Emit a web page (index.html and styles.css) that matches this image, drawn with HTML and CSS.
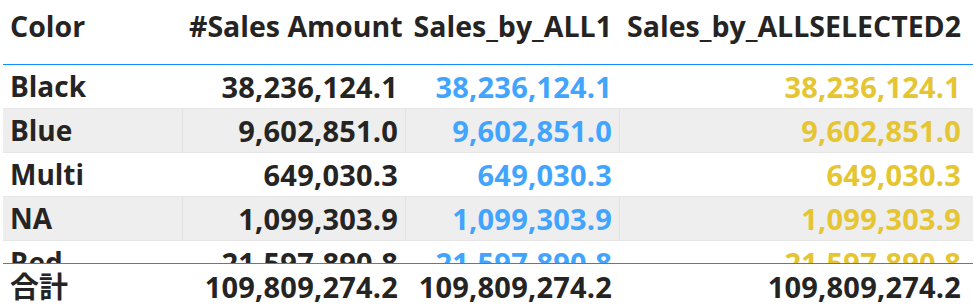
FILE: index.html
```html
<!DOCTYPE html>
<html>
<head>
<meta charset="utf-8">
<link rel="stylesheet" href="styles.css">
</head>
<body>
<div class="table">
  <div class="row head">
    <div class="cell left">Color</div>
    <div class="cell">#Sales Amount</div>
    <div class="cell">Sales_by_ALL1</div>
    <div class="cell">Sales_by_ALLSELECTED2</div>
  </div>
  <div class="body">
    <div class="row data">
      <div class="cell left">Black</div>
      <div class="cell num">38,236,124.1</div>
      <div class="cell num blue">38,236,124.1</div>
      <div class="cell num gold">38,236,124.1</div>
    </div>
    <div class="row data alt">
      <div class="cell left">Blue</div>
      <div class="cell num">9,602,851.0</div>
      <div class="cell num blue">9,602,851.0</div>
      <div class="cell num gold">9,602,851.0</div>
    </div>
    <div class="row data">
      <div class="cell left">Multi</div>
      <div class="cell num">649,030.3</div>
      <div class="cell num blue">649,030.3</div>
      <div class="cell num gold">649,030.3</div>
    </div>
    <div class="row data alt">
      <div class="cell left">NA</div>
      <div class="cell num">1,099,303.9</div>
      <div class="cell num blue">1,099,303.9</div>
      <div class="cell num gold">1,099,303.9</div>
    </div>
    <div class="row data">
      <div class="cell left">Red</div>
      <div class="cell num">21,597,890.8</div>
      <div class="cell num blue">21,597,890.8</div>
      <div class="cell num gold">21,597,890.8</div>
    </div>
  </div>
  <div class="row total">
    <div class="cell left cjk">合計</div>
    <div class="cell num">109,809,274.2</div>
    <div class="cell num">109,809,274.2</div>
    <div class="cell num">109,809,274.2</div>
  </div>
</div>
</body>
</html>
```
FILE: styles.css
```css
html, body {
  margin: 0;
  padding: 0;
  background: #ffffff;
}
body {
  font-family: "Open Sans", "Noto Sans CJK JP", sans-serif;
  font-weight: 700;
  color: #252423;
}
.table {
  margin-left: 3px;
  width: 970px;
}
.row {
  display: grid;
  grid-template-columns: 179px 223px 214px 349px;
}
.cell {
  text-align: right;
  padding: 0 7px 0 7px;
  white-space: nowrap;
  overflow: hidden;
  font-size: 28px;
}
.cell.num {
  font-size: 29px;
  letter-spacing: 0.2px;
}
.cell.left {
  text-align: left;
}
.cell.cjk {
  font-size: 29px;
}
.head {
  height: 64px;
  border-bottom: 1px solid #118dff;
}
.head .cell {
  line-height: 52px;
  font-size: 28.5px;
}
.body {
  height: 198px;
  overflow: hidden;
}
.data {
  height: 43px;
  border-bottom: 1px solid #e6e6e6;
}
.data .cell {
  line-height: 43px;
}
.data.alt {
  background: #eeeeee;
}
.data.alt .cell + .cell {
  border-left: 1px solid #e4e4e4;
}
.blue {
  color: #41a4ff;
}
.gold {
  color: #e6c532;
}
.total {
  border-top: 1px solid #118dff;
  height: 44px;
}
.total .cell {
  line-height: 46px;
}
```
